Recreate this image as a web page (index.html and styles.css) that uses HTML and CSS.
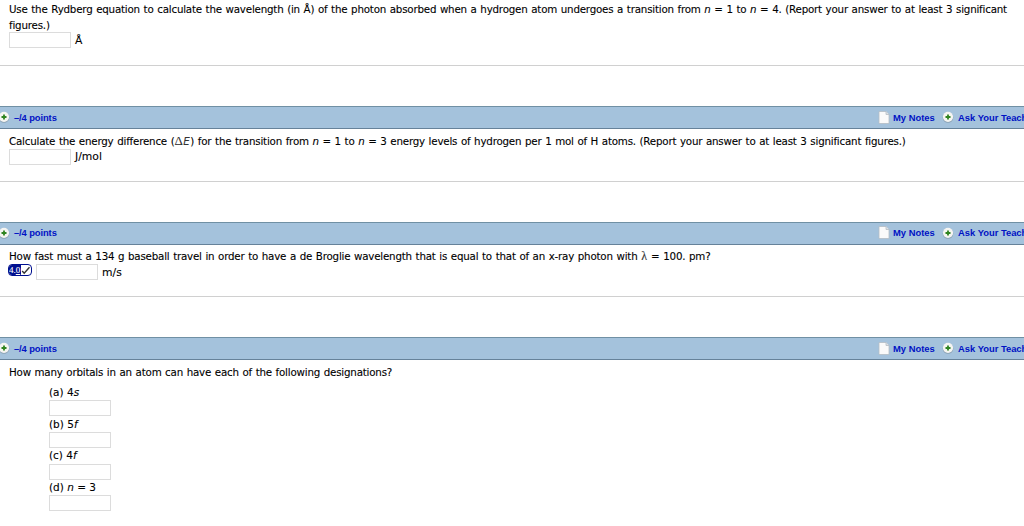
FILE: index.html
```html
<!DOCTYPE html>
<html lang="en">
<head>
    <meta charset="UTF-8">
    <title>Homework</title>
    <link rel="stylesheet" href="styles.css">
</head>
<body>

    <!-- shared icons -->
    <svg class="sprite" width="0" height="0">
        <symbol id="plus" viewBox="0 0 12 12">
            <circle cx="6" cy="6.4" r="5.3" fill="#8aa0b2"/>
            <circle cx="6" cy="5.8" r="5.1" fill="#f5f5f2"/>
            <path d="M6 3.5v5M3.5 6h5" stroke="#2f8420" stroke-width="1.8"/>
        </symbol>
        <symbol id="note" viewBox="0 0 12 13">
            <path d="M1 .5h7l3 3v9H1z" fill="#fafafa" stroke="#b4bcc4" stroke-width=".8"/>
            <path d="M8 .5v3h3" fill="#dde1e5" stroke="#b4bcc4" stroke-width=".8"/>
        </symbol>
    </svg>

    <div class="question first">
        <div class="content">
            <p>Use the Rydberg equation to calculate the wavelength (in Å) of the photon absorbed when a hydrogen atom undergoes a transition from <i>n</i> = 1 to <i>n</i> = 4. (Report your answer to at least 3 significant</p>
            <p>figures.)</p>
            <div class="answer"><input type="text" class="box"><span>Å</span></div>
        </div>
    </div>

    <div class="question">
        <div class="bar">
            <svg class="plus"><use href="#plus"/></svg>
            <a class="points">–/4 points</a>
            <svg class="note"><use href="#note"/></svg>
            <a class="notes">My Notes</a>
            <svg class="plus"><use href="#plus"/></svg>
            <a class="ask">Ask Your Teacher</a>
        </div>
        <div class="content">
            <p>Calculate the energy difference (<span class="math">Δ</span><i class="energy">E</i>) for the transition from <i>n</i> = 1 to <i>n</i> = 3 energy levels of hydrogen per 1 mol of H atoms. (Report your answer to at least 3 significant figures.)</p>
            <div class="answer"><input type="text" class="box"><span>J/mol</span></div>
        </div>
    </div>

    <div class="question">
        <div class="bar">
            <svg class="plus"><use href="#plus"/></svg>
            <a class="points">–/4 points</a>
            <svg class="note"><use href="#note"/></svg>
            <a class="notes">My Notes</a>
            <svg class="plus"><use href="#plus"/></svg>
            <a class="ask">Ask Your Teacher</a>
        </div>
        <div class="content">
            <p>How fast must a 134 g baseball travel in order to have a de Broglie wavelength that is equal to that of an x-ray photon with <span class="lambda">λ</span> = 100. pm?</p>
            <div class="answer">
                <div class="sigfig"><span>4.<u>0</u></span><svg width="10" height="9" viewBox="0 0 10 9"><path d="M1.2 5l2 2.2L8.5 1.3" fill="none" stroke="#333" stroke-width="1.4"/></svg></div>
                <input type="text" class="box"><span>m/s</span>
            </div>
        </div>
    </div>

    <div class="question last">
        <div class="bar">
            <svg class="plus"><use href="#plus"/></svg>
            <a class="points">–/4 points</a>
            <svg class="note"><use href="#note"/></svg>
            <a class="notes">My Notes</a>
            <svg class="plus"><use href="#plus"/></svg>
            <a class="ask">Ask Your Teacher</a>
        </div>
        <div class="content">
            <p>How many orbitals in an atom can have each of the following designations?</p>
            <div class="parts">
                <div class="part"><p>(a) 4<i>s</i></p><input type="text" class="box"></div>
                <div class="part"><p>(b) 5<i>f</i></p><input type="text" class="box"></div>
                <div class="part"><p>(c) 4<i>f</i></p><input type="text" class="box"></div>
                <div class="part"><p>(d) <i>n</i> = 3</p><input type="text" class="box"></div>
            </div>
        </div>
    </div>

</body>
</html>
```
FILE: styles.css
```css
body {
    margin: 0;
    background-color: #fff;
    color: #000;
    font-family: Verdana, "DejaVu Sans", sans-serif;
    font-size: 10.5px;
    line-height: 15.5px;
    -webkit-text-stroke: 0.1px;
    overflow: hidden;
}

.sprite {
    display: block;
}

p {
    margin: 0;
    white-space: nowrap;
}

.question {
    box-sizing: border-box;
    height: 75.7px;
    margin-bottom: 40px;
    border-bottom: 1px solid #d0d0d0;
}

.first {
    height: 66px;
}

.last {
    height: auto;
    margin: 0;
    border: none;
}

.bar {
    box-sizing: border-box;
    display: flex;
    align-items: center;
    height: 23px;
    padding-bottom: 1px;
    background-color: #a4c2dc;
    border-top: 1px solid #7090a4;
    border-bottom: 1px solid #66829a;
    font: bold 9.4px "Liberation Sans", Arial, sans-serif;
    color: #0012c4;
    white-space: nowrap;
    overflow: hidden;
    -webkit-text-stroke: 0;
}

.plus {
    flex: none;
    width: 12px;
    height: 12px;
    margin-left: -2px;
}

.points {
    flex: none;
    width: 864px;
    margin-left: 4px;
    letter-spacing: -0.1px;
}

.note {
    flex: none;
    width: 12px;
    height: 13px;
}

.notes {
    flex: none;
    width: 51px;
    margin-left: 3px;
}

.ask {
    flex: none;
    margin-left: 4px;
}

.content {
    padding: 4.5px 0 0 9px;
}

.content > p {
    font-size: 10.3px;
    letter-spacing: -0.205px;
    word-spacing: 0.6px;
}

.first .content {
    padding-top: 2px;
}

.answer {
    display: flex;
    gap: 4px;
    margin-top: -0.5px;
}

.first .answer {
    margin-top: -1px;
}

.answer > span {
    padding-top: 0.5px;
    font-size: 10.8px;
}

.box {
    box-sizing: border-box;
    display: block;
    width: 62px;
    height: 16px;
    padding: 0;
    border: 1px solid #dcdcdc;
    background-color: #fff;
}

.math,
.lambda {
    font-family: "Liberation Serif", serif;
    font-size: 12px;
    line-height: 1;
    color: #333;
}

.math {
    font-size: 13px;
    letter-spacing: 0.5px;
}

.lambda {
    letter-spacing: 0.5px;
}

.energy {
    color: #333;
    letter-spacing: 0.5px;
}

.sigfig {
    box-sizing: border-box;
    display: flex;
    align-items: center;
    width: 24px;
    height: 12px;
    margin: 0 0 0 -1px;
    border: 1px solid #001090;
    border-radius: 4px;
    background-color: #fff;
    overflow: hidden;
}

.sigfig span {
    flex: none;
    width: 12px;
    background-color: #001090;
    color: #fff;
    font: 9px/10px "Liberation Serif", serif;
}

.parts {
    padding: 4.5px 0 0 40px;
}

.part {
    height: 31.7px;
}
```
